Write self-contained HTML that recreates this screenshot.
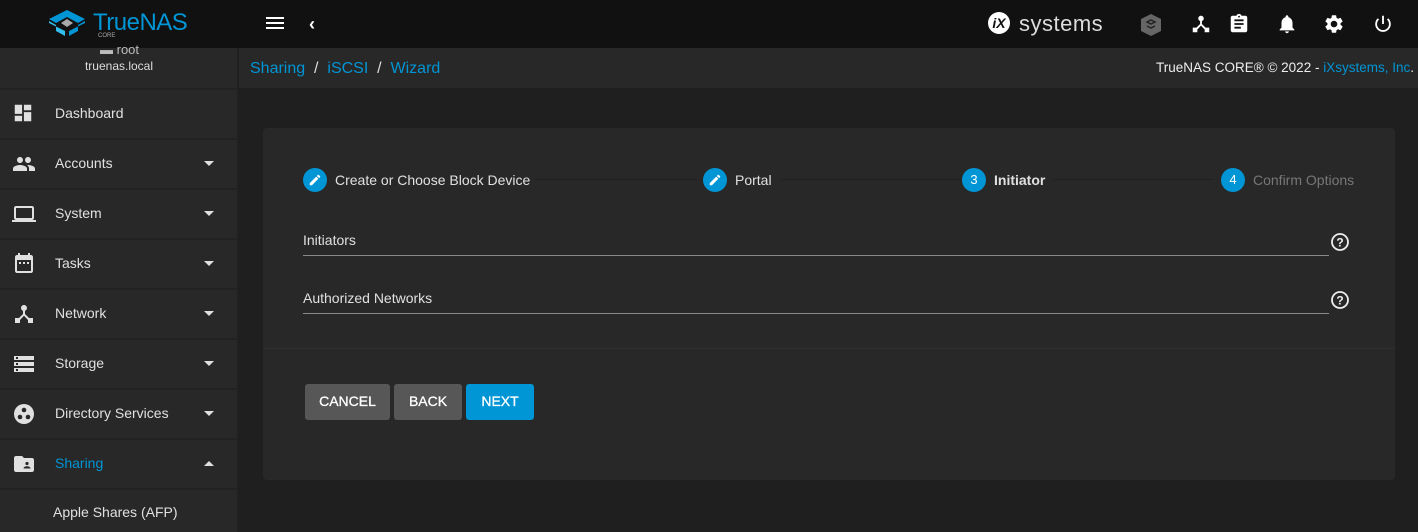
<!DOCTYPE html>
<html><head><meta charset="utf-8"><style>
*{box-sizing:border-box;margin:0;padding:0}
html,body{width:1418px;height:532px;overflow:hidden}
body{background:#1f1f1f;font-family:"Liberation Sans",sans-serif;color:#e0e0e0;position:relative}
.top{position:absolute;left:0;top:0;width:1418px;height:48px;background:#111}
.side{position:absolute;left:0;top:48px;width:238px;height:484px;background:#282828;border-right:1px solid #222}
.item{position:absolute;left:0;width:238px;height:50px;border-top:2px solid #222;font-size:14px;color:#e0e0e0}
.item span{position:absolute;left:55px;top:15px}
.item svg.ic{position:absolute;left:12px;top:12px}
.item .car{position:absolute;left:204px;top:21px;width:0;height:0;border-left:5px solid transparent;border-right:5px solid transparent;border-top:5px solid #e0e0e0}
.crumb{position:absolute;left:239px;top:48px;width:1179px;height:40px;background:#282828}
.card{position:absolute;left:263px;top:128px;width:1132px;height:352px;background:#282828;border-radius:4px}
.circ{position:absolute;width:24px;height:24px;border-radius:50%;background:#0095d5;color:#fff;font-size:13px;text-align:center;line-height:24px}
.lbl{position:absolute;font-size:14px;top:172px}
.btn{position:absolute;top:384px;height:36px;border-radius:3px;font-size:14px;color:#fff;text-align:center;line-height:34px;-webkit-text-stroke:0.3px #fff}
</style></head><body>
<div class="top">
 <svg style="position:absolute;left:48px;top:9px" width="38" height="28" viewBox="0 0 38 28"><path d="M19 1 L37 10 L30 14 L19 8 L8 14 L1 10Z" fill="#0095d5"/><path d="M1 12 L8 16 L8 22 L17 27 L17 22 L1 14Z" fill="#31beec"/><path d="M37 12 L30 16 L30 22 L21 27 L21 22 L37 14Z" fill="#0095d5"/><path d="M19 10 L25 14 L19 18 L13 14Z" fill="#aaa"/></svg>
 <div style="position:absolute;left:93px;top:9px;font-size:24px;color:#0095d5;letter-spacing:-0.5px">TrueNAS</div>
 <div style="position:absolute;left:98px;top:33px;font-size:6px;color:#aaa">CORE</div>
 <div style="position:absolute;left:266px;top:17px;width:18px;height:2px;background:#fff;box-shadow:0 5px 0 #fff,0 10px 0 #fff"></div>
 <div style="position:absolute;left:309px;top:14px;font-size:18px;color:#fff;font-weight:bold">‹</div>
 <div style="position:absolute;left:988px;top:12px;width:22px;height:22px;border-radius:50%;background:#fff;color:#111;font-size:14px;font-weight:bold;text-align:center;line-height:22px;font-style:italic">iX</div>
 <div style="position:absolute;left:1019px;top:11px;font-size:22px;color:#ddd;letter-spacing:0.5px">systems</div>
 <svg style="position:absolute;left:1140px;top:13px" width="22" height="24" viewBox="0 0 22 24"><path d="M11 1 L21 6 L21 18 L11 23 L1 18 L1 6Z" fill="#666"/><path d="M7 9 L11 7 L15 9 L11 11Z M7 13 L11 15 L15 13" stroke="#222" fill="none" stroke-width="1.5"/></svg>
 <svg style="position:absolute;left:1190px;top:13px" width="22" height="22" viewBox="0 0 24 24"><path fill="#fff" d="M17 16l-4-4V8.82C14.160 8.4 15 7.3 15 6c0-1.66-1.34-3-3-3S9 4.34 9 6c0 1.3.84 2.4 2 2.82V12l-4 4H3v5h5v-3.05l4-4.2 4 4.2V21h5v-5h-4z"/></svg>
 <svg style="position:absolute;left:1228px;top:12px" width="22" height="24" viewBox="0 0 24 24"><path fill="#fff" d="M19 3h-4.18C14.4 1.84 13.3 1 12 1s-2.4.84-2.82 2H5c-1.1 0-2 .9-2 2v14c0 1.1.9 2 2 2h14c1.1 0 2-.9 2-2V5c0-1.1-.9-2-2-2zm-7 0c.55 0 1 .45 1 1s-.45 1-1 1-1-.45-1-1 .45-1 1-1zm2 14H7v-2h7v2zm3-4H7v-2h10v2zm0-4H7V7h10v2z"/></svg>
 <svg style="position:absolute;left:1276px;top:13px" width="22" height="22" viewBox="0 0 24 24"><path fill="#fff" d="M12 22c1.1 0 2-.9 2-2h-4c0 1.1.9 2 2 2zm6-6v-5c0-3.07-1.63-5.64-4.5-6.32V4c0-.83-.67-1.5-1.5-1.5s-1.5.67-1.5 1.5v.68C7.64 5.36 6 7.920 6 11v5l-2 2v1h16v-1l-2-2z"/></svg>
 <svg style="position:absolute;left:1323px;top:13px" width="22" height="22" viewBox="0 0 24 24"><path fill="#fff" d="M19.14 12.94c.04-.3.06-.61.06-.94 0-.32-.02-.64-.07-.94l2.03-1.58a.49.49 0 00.12-.61l-1.92-3.32a.488.488 0 00-.59-.22l-2.39.96c-.5-.38-1.03-.7-1.62-.94l-.36-2.54a.484.484 0 00-.48-.41h-3.84c-.24 0-.43.17-.47.41l-.36 2.54c-.59.24-1.13.57-1.62.94l-2.39-.96c-.22-.08-.47 0-.59.22L2.74 8.87c-.12.21-.08.47.12.61l2.03 1.58c-.05.3-.09.63-.09.94s.02.64.07.94l-2.03 1.58a.49.49 0 00-.12.61l1.92 3.32c.12.22.37.29.59.22l2.39-.96c.5.38 1.03.7 1.62.94l.36 2.54c.05.24.24.41.48.41h3.840c.24 0 .44-.17.47-.41l.36-2.54c.59-.24 1.13-.56 1.62-.94l2.39.96c.22.08.47 0 .59-.22l1.92-3.32c.12-.22.07-.47-.12-.61l-2.01-1.58zM12 15.6c-1.98 0-3.6-1.62-3.6-3.6s1.62-3.6 3.6-3.6 3.6 1.62 3.6 3.6-1.62 3.6-3.6 3.6z"/></svg>
 <svg style="position:absolute;left:1372px;top:13px" width="22" height="22" viewBox="0 0 24 24"><path fill="none" stroke="#fff" stroke-width="2" d="M12 3v9M7 6.5a7.5 7.5 0 1010 0"/></svg>
</div>
<div class="side">
 <div style="position:absolute;left:100px;top:-6px;font-size:13px;color:#bbb">▬ root</div>
 <div style="position:absolute;left:0;width:238px;top:11px;text-align:center;font-size:12px;color:#ddd">truenas.local</div>
 <div class="item" style="top:40px"><svg class="ic" width="22" height="22" viewBox="0 0 24 24"><path fill="#e0e0e0" d="M3 13h8V3H3v10zm0 8h8v-6H3v6zm10 0h8V11h-8v10zm0-18v6h8V3h-8z"/></svg><span>Dashboard</span></div>
 <div class="item" style="top:90px"><svg class="ic" width="24" height="24" viewBox="0 0 24 24"><path fill="#e0e0e0" d="M16 11c1.66 0 2.99-1.34 2.99-3S17.66 5 16 5c-1.66 0-3 1.34-3 3s1.34 3 3 3zm-8 0c1.66 0 2.99-1.34 2.99-3S9.66 5 8 5C6.34 5 5 6.34 5 8s1.34 3 3 3zm0 2c-2.33 0-7 1.17-7 3.5V19h14v-2.5c0-2.33-4.67-3.5-7-3.5zm8 0c-.29 0-.62.02-.97.05 1.16.84 1.97 1.97 1.97 3.45V19h6v-2.5c0-2.33-4.67-3.5-7-3.5z"/></svg><span>Accounts</span><i class="car"></i></div>
 <div class="item" style="top:140px"><svg class="ic" width="24" height="24" viewBox="0 0 24 24"><path fill="#e0e0e0" d="M20 18c1.1 0 1.99-.9 1.99-2L22 6c0-1.1-.9-2-2-2H4c-1.1 0-2 .9-2 2v10c0 1.1.9 2 2 2H0v2h24v-2h-4zM4 6h16v10H4V6z"/></svg><span>System</span><i class="car"></i></div>
 <div class="item" style="top:190px"><svg class="ic" width="24" height="24" viewBox="0 0 24 24"><path fill="#e0e0e0" d="M19 3h-1V1h-2v2H8V1H6v2H5c-1.11 0-2 .9-2 2v14c0 1.1.89 2 2 2h14c1.1 0 2-.9 2-2V5c0-1.1-.9-2-2-2zm0 16H5V8h14v11zM7 10h2v2H7zm4 0h2v2h-2zm4 0h2v2h-2z"/></svg><span>Tasks</span><i class="car"></i></div>
 <div class="item" style="top:240px"><svg class="ic" width="24" height="24" viewBox="0 0 24 24"><path fill="#e0e0e0" d="M17 16l-4-4V8.82C14.16 8.4 15 7.3 15 6c0-1.66-1.34-3-3-3S9 4.34 9 6c0 1.3.84 2.4 2 2.82V12l-4 4H3v5h5v-3.05l4-4.2 4 4.2V21h5v-5h-4z"/></svg><span>Network</span><i class="car"></i></div>
 <div class="item" style="top:290px"><svg class="ic" width="24" height="24" viewBox="0 0 24 24"><path fill="#e0e0e0" d="M2 20h20v-4H2v4zm2-3h2v2H4v-2zM2 4v4h20V4H2zm4 3H4V5h2v2zm-4 7h20v-4H2v4zm2-3h2v2H4v-2z"/></svg><span>Storage</span><i class="car"></i></div>
 <div class="item" style="top:340px"><svg class="ic" width="24" height="24" viewBox="0 0 24 24"><circle cx="12" cy="12" r="10" fill="#e0e0e0"/><circle cx="12" cy="8" r="2.3" fill="#282828"/><circle cx="8" cy="15" r="2.3" fill="#282828"/><circle cx="16" cy="15" r="2.3" fill="#282828"/></svg><span>Directory Services</span><i class="car"></i></div>
 <div class="item" style="top:390px"><svg class="ic" width="24" height="24" viewBox="0 0 24 24"><path fill="#e0e0e0" d="M20 6h-8l-2-2H4c-1.1 0-2 .9-2 2v12c0 1.1.9 2 2 2h16c1.1 0 2-.9 2-2V8c0-1.1-.9-2-2-2z"/><circle cx="15" cy="11.5" r="1.6" fill="#282828"/><path d="M11.5 16.5c0-1.5 2-2.2 3.5-2.2s3.5.7 3.5 2.2z" fill="#282828"/></svg><span style="color:#0095d5">Sharing</span><i class="car" style="border-top:0;border-bottom:5px solid #e0e0e0"></i></div>
 <div class="item" style="top:440px"><span style="left:53px;top:14px">Apple Shares (AFP)</span></div>
</div>
<div class="crumb">
 <div style="position:absolute;left:11px;top:12px;font-size:16px;color:#0095d5">Sharing <span style="color:#ddd">&nbsp;/&nbsp;</span> iSCSI <span style="color:#ddd">&nbsp;/&nbsp;</span> Wizard</div>
 <div style="position:absolute;right:4px;top:12px;font-size:13.5px;color:#eee">TrueNAS CORE® © 2022 - <span style="color:#0095d5">iXsystems, Inc</span>.</div>
</div>
<div class="card">
 <div style="position:absolute;left:272px;top:51px;width:162px;height:1px;background:#1f1f1f"></div>
 <div style="position:absolute;left:518px;top:51px;width:180px;height:1px;background:#1f1f1f"></div>
 <div style="position:absolute;left:790px;top:51px;width:160px;height:1px;background:#1f1f1f"></div>
 <div style="position:absolute;left:0;top:220px;width:1132px;height:1px;background:#2f2f2f"></div>
</div>
<div class="circ" style="left:303px;top:168px"><svg width="14" height="14" viewBox="0 0 24 24" style="margin-top:5px"><path fill="#fff" d="M3 17.25V21h3.75L17.81 9.94l-3.75-3.75L3 17.25zM20.71 7.04a1 1 0 000-1.41l-2.34-2.34a1 1 0 00-1.41 0l-1.83 1.83 3.75 3.75 1.83-1.83z"/></svg></div>
<div class="lbl" style="left:335px">Create or Choose Block Device</div>
<div class="circ" style="left:703px;top:168px"><svg width="14" height="14" viewBox="0 0 24 24" style="margin-top:5px"><path fill="#fff" d="M3 17.25V21h3.75L17.81 9.94l-3.75-3.75L3 17.25zM20.71 7.04a1 1 0 000-1.41l-2.34-2.34a1 1 0 00-1.41 0l-1.83 1.83 3.75 3.75 1.83-1.83z"/></svg></div>
<div class="lbl" style="left:735px">Portal</div>
<div class="circ" style="left:962px;top:168px">3</div>
<div class="lbl" style="left:994px;font-weight:bold">Initiator</div>
<div class="circ" style="left:1221px;top:168px">4</div>
<div class="lbl" style="left:1253px;color:#777">Confirm Options</div>
<div style="position:absolute;left:303px;top:232px;font-size:14px">Initiators</div>
<div style="position:absolute;left:303px;top:255px;width:1026px;height:1px;background:#888"></div>
<div style="position:absolute;left:303px;top:290px;font-size:14px">Authorized Networks</div>
<div style="position:absolute;left:303px;top:313px;width:1026px;height:1px;background:#888"></div>
<svg style="position:absolute;left:1330px;top:232px" width="20" height="20" viewBox="0 0 20 20"><circle cx="10" cy="10" r="8" fill="none" stroke="#eee" stroke-width="1.8"/><text x="10" y="14.5" font-size="12" font-weight="bold" text-anchor="middle" fill="#eee" font-family="Liberation Sans">?</text></svg>
<svg style="position:absolute;left:1330px;top:290px" width="20" height="20" viewBox="0 0 20 20"><circle cx="10" cy="10" r="8" fill="none" stroke="#eee" stroke-width="1.8"/><text x="10" y="14.5" font-size="12" font-weight="bold" text-anchor="middle" fill="#eee" font-family="Liberation Sans">?</text></svg>
<div class="btn" style="left:305px;width:85px;background:#575757">CANCEL</div>
<div class="btn" style="left:394px;width:68px;background:#575757">BACK</div>
<div class="btn" style="left:466px;width:68px;background:#0095d5">NEXT</div>
</body></html>
